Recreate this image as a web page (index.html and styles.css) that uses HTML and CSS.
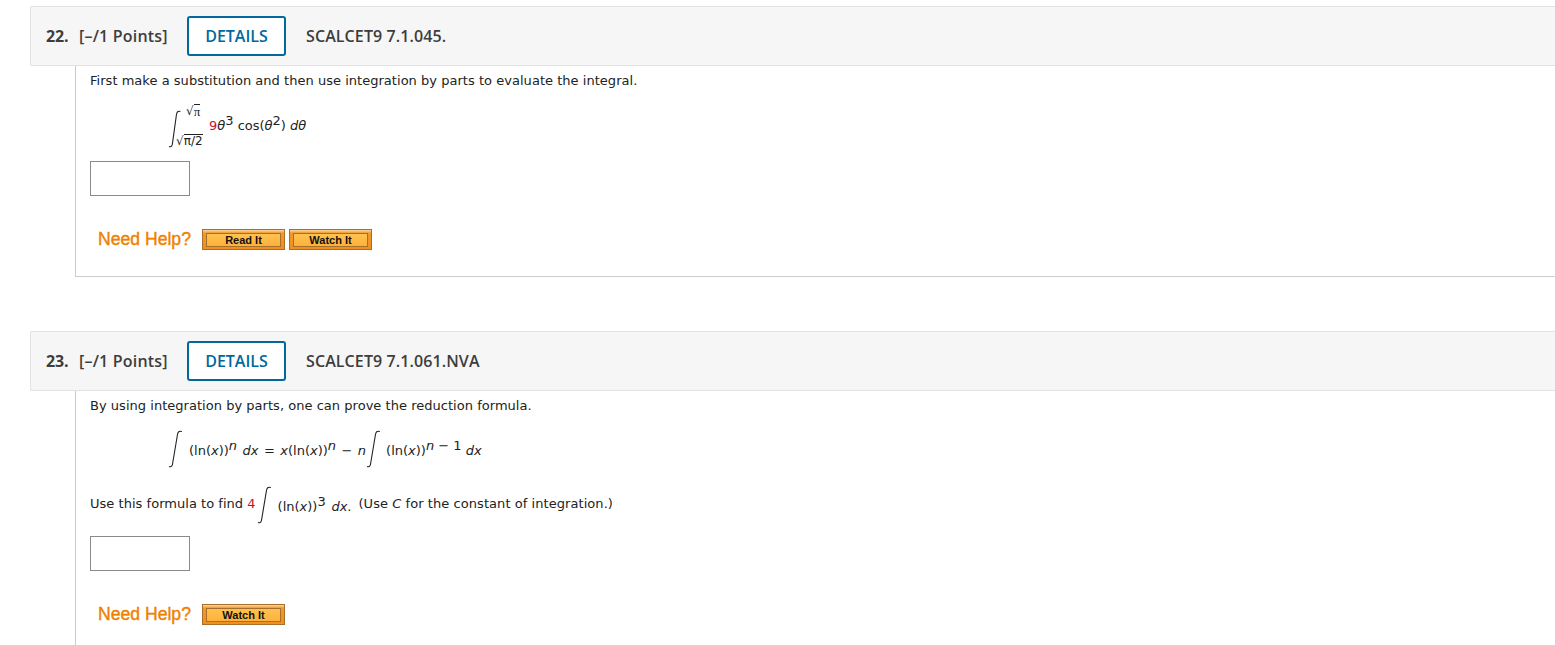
FILE: index.html
```html
<!DOCTYPE html>
<html lang="en">
<head>
<meta charset="utf-8">
<title>Questions</title>
<link rel="stylesheet" href="styles.css">
</head>
<body>
<section class="question q22">
  <header class="qhead">
    <span class="num">22.</span>
    <span class="pts">[–/1 Points]</span>
    <button class="details">DETAILS</button>
    <span class="code">SCALCET9 7.1.045.</span>
  </header>
  <div class="qbody">
    <p class="text">First make a substitution and then use integration by parts to evaluate the integral.</p>
    <div class="math m1">
      <svg class="int-def" width="14" height="38" viewBox="0 0 14 38"><path d="M1 36.500c2.500 1 3.200-.5 3.600-4L8.400 5c.4-3 1.500-4.500 4-3.500" fill="none" stroke="#222" stroke-width="1.100"/></svg>
      <span class="limits">
        <span class="lim-top"><span class="rad">√</span><span class="over pi">π</span></span>
        <span class="lim-bot"><span class="rad">√</span><span class="over">π/2</span></span>
      </span>
      <span class="expr e1"><span class="red">9</span><i>θ</i><sup>3</sup> cos(<i>θ</i><sup>2</sup>) <i>dθ</i></span>
    </div>
    <input class="answer" type="text" aria-label="answer">
    <div class="help">
      <span class="need">Need Help?</span>
      <span class="btn"><span>Read It</span></span>
      <span class="btn"><span>Watch It</span></span>
    </div>
  </div>
</section>
<section class="question q23">
  <header class="qhead">
    <span class="num">23.</span>
    <span class="pts">[–/1 Points]</span>
    <button class="details">DETAILS</button>
    <span class="code">SCALCET9 7.1.061.NVA</span>
  </header>
  <div class="qbody">
    <p class="text">By using integration by parts, one can prove the reduction formula.</p>
    <div class="math m2">
      <svg class="int" width="15" height="38" viewBox="0 0 15 38"><path d="M1 36.500c2.500 1 3.400-.5 3.800-4L9.400 5c.4-3 1.500-4.500 4.500-3.500" fill="none" stroke="#222" stroke-width="1.100"/></svg>
      <span class="expr e2">(ln(<i>x</i>))<sup><i>n</i></sup> <i>dx</i> = <i>x</i>(ln(<i>x</i>))<sup><i>n</i></sup> − <i>n</i></span>
      <svg class="int" width="15" height="38" viewBox="0 0 15 38"><path d="M1 36.500c2.500 1 3.400-.5 3.800-4L9.400 5c.4-3 1.500-4.500 4.500-3.500" fill="none" stroke="#222" stroke-width="1.100"/></svg>
      <span class="expr e3">(ln(<i>x</i>))<sup><i>n</i> − 1</sup> <i>dx</i></span>
    </div>
    <div class="math m3">
      <span class="use">Use this formula to find <span class="red">4</span></span>
      <svg class="int" width="15" height="38" viewBox="0 0 15 38"><path d="M1 36.500c2.500 1 3.400-.5 3.800-4L9.400 5c.4-3 1.500-4.500 4.500-3.500" fill="none" stroke="#222" stroke-width="1.100"/></svg>
      <span class="expr e4">(ln(<i>x</i>))<sup>3</sup> <i>dx</i>.</span>
      <span class="use after">(Use <i>C</i> for the constant of integration.)</span>
    </div>
    <input class="answer" type="text" aria-label="answer">
    <div class="help">
      <span class="need">Need Help?</span>
      <span class="btn"><span>Watch It</span></span>
    </div>
  </div>
</section>
</body>
</html>
```
FILE: styles.css
```css
* { box-sizing: border-box; }
html, body { margin: 0; padding: 0; }
body {
  height: 645px;
  overflow: hidden;
  background: #fff;
  font-family: "DejaVu Sans", Verdana, sans-serif;
  color: #222;
}
.question { margin-left: 30px; }
.q22 { padding-top: 6px; height: 331px; }
.qhead {
  height: 60px;
  display: flex;
  align-items: center;
  background: #f6f6f6;
  border: 1px solid #e2e2e2;
  border-right: 0;
  border-radius: 2px 0 0 2px;
  padding-left: 15px;
  font-family: "Open Sans", sans-serif;
  font-weight: 600;
  font-size: 16px;
  color: #3d3d3d;
}
.num { width: 32px; font-weight: 700; letter-spacing: -.2px; }
.pts { width: 109px; padding-left: 1px; letter-spacing: .2px; }
.code { letter-spacing: .1px; }
.details {
  width: 99px;
  height: 40px;
  background: #fff;
  border: 2px solid #00689d;
  border-radius: 3px;
  color: #00689d;
  font: 600 16px "Open Sans", sans-serif;
  padding: 0;
  margin-right: 20px;
}
.qbody {
  margin-left: 45px;
  border-left: 1px solid #ccc;
  padding-left: 14px;
}
.q22 .qbody { height: 211px; border-bottom: 1px solid #ccc; }
.q23 .qbody { height: 255px; }
.text {
  margin: 0;
  padding-top: 6px;
  font-size: 13px;
  line-height: 17px;
  letter-spacing: .03px;
  color: #222;
}
.math {
  display: flex;
  align-items: center;
  font-size: 13px;
  color: #222;
}
.red { color: #c8102e; }
.expr i, .use i { font-style: italic; }
sup { font-size: 13px; line-height: 0; vertical-align: 5px; }
.int { flex: none; }
.expr { white-space: nowrap; }

.m1 { padding-left: 78px; height: 50px; margin-top: 10px; }
.int-def { flex: none; margin: 10px -6px 0 0; }
.limits {
  display: flex;
  flex-direction: column;
  align-items: flex-start;
  width: 33px;
  height: 44px;
  margin-top: 4px;
}
.rad { font-size: 12px; line-height: 15px; }
.over { border-top: 1px solid #222; line-height: 13px; height: 14px; font-size: 12px; }
.pi { font-family: "Liberation Serif", serif; font-size: 13px; }
.lim-top { margin-left: 10px; display: flex; height: 14px; }
.lim-bot { display: flex; height: 14px; margin-top: 16px; }
.e1 { margin-top: 3px; }

.answer {
  display: block;
  width: 100px;
  height: 35px;
  border: 1px solid #8a8a8a;
  background: #fff;
  margin-top: 12px;
  padding: 0;
}
.help {
  display: flex;
  align-items: center;
  gap: 4px;
  margin-top: 32px;
  padding-left: 8px;
  height: 22px;
}
.need {
  font: 17.600px/22px "Liberation Sans", Arial, sans-serif;
  color: #ef8100;
  width: 100px;
  white-space: nowrap;
  -webkit-text-stroke: .4px #ef8100;
}
.btn {
  display: block;
  width: 83px;
  height: 21px;
  padding: 3px 3px 2px;
  background: linear-gradient(#fbd9a0 0, #ef9a2e 3px, #ef8f1e 100%);
  border: 1px solid #a86f2c;
}
.btn span {
  display: block;
  height: 100%;
  background: linear-gradient(#ffc24f, #feb13c);
  border: 1px solid #a86f2c;
  text-align: center;
  font: 700 11px/13px "Liberation Sans", Arial, sans-serif;
  color: #111;
}

.m2 { padding-left: 78px; height: 44px; margin-top: 13px; }
.e2 { margin: 3px 0 0 6px; word-spacing: 1.300px; }
.e3 { margin: 3px 0 0 5px; }
.m3 { height: 44px; margin-top: 10px; }
.m3 .int { margin: 4px 0 0 1px; }
.e4 { margin: 6px 0 0 6px; word-spacing: 1.500px; }
.use { letter-spacing: .03px; }
.after { margin-left: 7px; letter-spacing: .06px; }
.q23 .answer { margin-top: 11px; }
```
